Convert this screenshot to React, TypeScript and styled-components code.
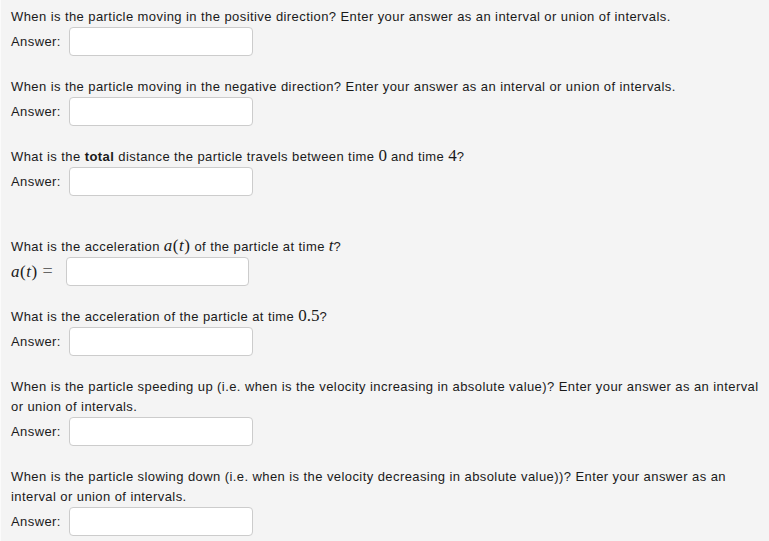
import React from "react";
import styled, { createGlobalStyle } from "styled-components";

const Global = createGlobalStyle`
  html, body { margin: 0; padding: 0; background: #f4f4f4; }
  body { font-family: "Liberation Sans", Arial, sans-serif; font-size: 13px; color: #1a1a1a; letter-spacing: 0.42px; }
`;

const Page = styled.div`
  min-height: 541px;
  box-sizing: border-box;
  padding: 7px 7px 0 11px;
  border-left: 1px solid #fbfbfb;
`;

const Part = styled.div<{ $extra?: boolean }>`
  display: flex;
  flex-direction: column;
  margin-bottom: ${(p) => (p.$extra ? 41 : 21)}px;
`;

const Question = styled.div`
  line-height: 20px;
  margin-left: -1px;
`;

const AnswerRow = styled.div`
  display: flex;
  align-items: center;
  gap: 8px;
  height: 29px;
  margin-left: -1px;
`;

const Label = styled.span`
  width: 50px;
`;

const MathLabel = styled.span`
  width: 47px;
  font-family: "Liberation Serif", "DejaVu Serif", serif;
  font-size: 17px;
  letter-spacing: 0;
  white-space: nowrap;
`;

const AnswerInput = styled.input<{ $w?: number }>`
  box-sizing: border-box;
  width: ${(p) => p.$w ?? 184}px;
  height: 29px;
  background: #fff;
  border: 1px solid #cccccc;
  border-radius: 4px;
  padding: 0 6px;
  font: inherit;
  outline: none;
`;

const MathI = styled.span`
  font-family: "Liberation Serif", "DejaVu Serif", serif;
  font-style: italic;
  font-size: 17px;
  line-height: 1;
  letter-spacing: 0;
`;

const MathN = styled.span`
  font-family: "Liberation Serif", "DejaVu Serif", serif;
  font-size: 17px;
  line-height: 1;
  letter-spacing: 0;
`;

const Paren = styled.span`
  font-style: normal;
  margin: 0 0.5px;
`;

const Eq = styled.span`
  color: #666;
  font-size: 18px;
  margin-left: 5px;
`;

const Answer = () => (
  <AnswerRow>
    <Label>Answer:</Label>
    <AnswerInput type="text" />
  </AnswerRow>
);

const At = () => (
  <MathI>
    a<Paren>(</Paren>t<Paren>)</Paren>
  </MathI>
);

export default function App() {
  return (
    <>
      <Global />
      <Page>
        <Part>
          <Question>
            When is the particle moving in the positive direction? Enter your answer as an interval or union of
            intervals.
          </Question>
          <Answer />
        </Part>
        <Part>
          <Question>
            When is the particle moving in the negative direction? Enter your answer as an interval or union of
            intervals.
          </Question>
          <Answer />
        </Part>
        <Part $extra>
          <Question>
            What is the <b>total</b> distance the particle travels between time <MathN>0</MathN> and time{" "}
            <MathN>4</MathN>?
          </Question>
          <Answer />
        </Part>
        <Part>
          <Question>
            What is the acceleration <At /> of the particle at time <MathI>t</MathI>?
          </Question>
          <AnswerRow>
            <MathLabel>
              <At />
              <Eq>=</Eq>
            </MathLabel>
            <AnswerInput type="text" $w={183} />
          </AnswerRow>
        </Part>
        <Part>
          <Question>
            What is the acceleration of the particle at time <MathN>0.5</MathN>?
          </Question>
          <Answer />
        </Part>
        <Part>
          <Question>
            When is the particle speeding up (i.e. when is the velocity increasing in absolute value)? Enter your
            answer as an interval or union of intervals.
          </Question>
          <Answer />
        </Part>
        <Part>
          <Question>
            When is the particle slowing down (i.e. when is the velocity decreasing in absolute value))? Enter your
            answer as an interval or union of intervals.
          </Question>
          <Answer />
        </Part>
      </Page>
    </>
  );
}
